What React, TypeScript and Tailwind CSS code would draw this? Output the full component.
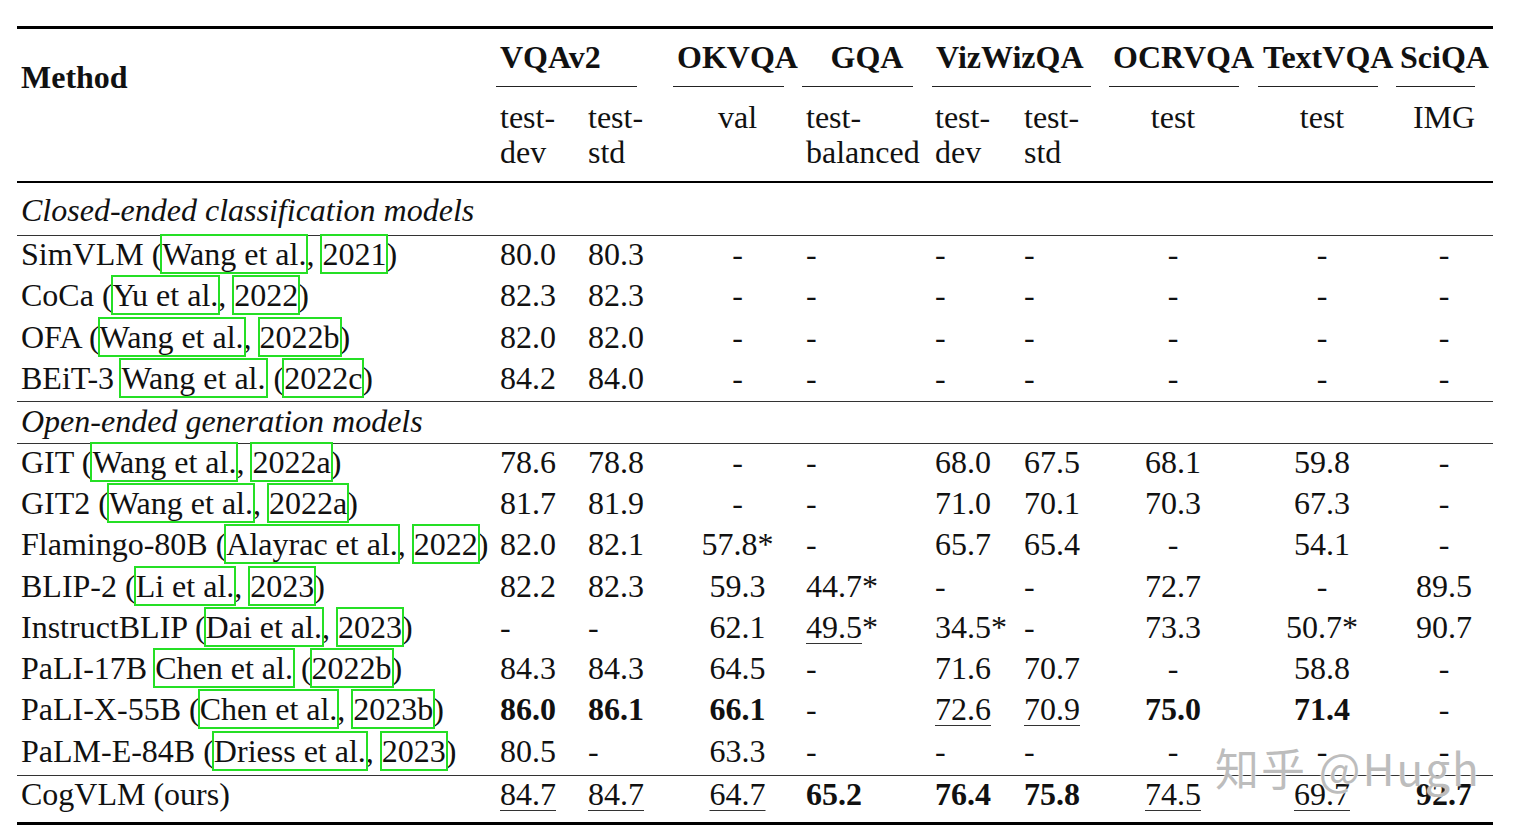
import React from "react";

type Val = string | { v: string; b?: boolean; u?: boolean };

const COLS =
  "grid grid-cols-[479px_88px_89px_129px_130px_88px_89px_149px_138px_97px]";

// per-column alignment of body cells
const CELL = [
  "pl-[4px] whitespace-nowrap",
  "pl-[4px]",
  "pl-[4px]",
  "text-center",
  "pl-[4px]",
  "pl-[3px]",
  "pl-[4px]",
  "text-center pr-[21px]",
  "text-center pr-[10px]",
  "text-center pr-[1px]",
];

function C({ children }: { children: React.ReactNode }) {
  return <span className="outline-2 outline-solid outline-[#25df25]">{children}</span>;
}

function Num({ val }: { val: Val }) {
  if (typeof val === "string") return <>{val}</>;
  const star = val.v.endsWith("*");
  const core = star ? val.v.slice(0, -1) : val.v;
  return (
    <span className={val.b ? "font-bold" : ""}>
      <span className={val.u ? "underline decoration-[1px] underline-offset-[5px] decoration-[#333]" : ""}>
        {core}
      </span>
      {star ? "*" : ""}
    </span>
  );
}

const b = (v: string): Val => ({ v, b: true });
const u = (v: string): Val => ({ v, u: true });

const CLOSED: { m: React.ReactNode; vals: Val[] }[] = [
  {
    m: <>SimVLM (<C>Wang et al.</C>, <C>2021</C>)</>,
    vals: ["80.0", "80.3", "-", "-", "-", "-", "-", "-", "-"],
  },
  {
    m: <>CoCa (<C>Yu et al.</C>, <C>2022</C>)</>,
    vals: ["82.3", "82.3", "-", "-", "-", "-", "-", "-", "-"],
  },
  {
    m: <>OFA (<C>Wang et al.</C>, <C>2022b</C>)</>,
    vals: ["82.0", "82.0", "-", "-", "-", "-", "-", "-", "-"],
  },
  {
    m: <>BEiT-3 <C>Wang et al.</C> (<C>2022c</C>)</>,
    vals: ["84.2", "84.0", "-", "-", "-", "-", "-", "-", "-"],
  },
];

const OPEN: { m: React.ReactNode; vals: Val[] }[] = [
  {
    m: <>GIT (<C>Wang et al.</C>, <C>2022a</C>)</>,
    vals: ["78.6", "78.8", "-", "-", "68.0", "67.5", "68.1", "59.8", "-"],
  },
  {
    m: <>GIT2 (<C>Wang et al.</C>, <C>2022a</C>)</>,
    vals: ["81.7", "81.9", "-", "-", "71.0", "70.1", "70.3", "67.3", "-"],
  },
  {
    m: <>Flamingo-80B (<C>Alayrac et al.</C>, <C>2022</C>)</>,
    vals: ["82.0", "82.1", "57.8*", "-", "65.7", "65.4", "-", "54.1", "-"],
  },
  {
    m: <>BLIP-2 (<C>Li et al.</C>, <C>2023</C>)</>,
    vals: ["82.2", "82.3", "59.3", "44.7*", "-", "-", "72.7", "-", "89.5"],
  },
  {
    m: <>InstructBLIP (<C>Dai et al.</C>, <C>2023</C>)</>,
    vals: ["-", "-", "62.1", u("49.5*"), "34.5*", "-", "73.3", "50.7*", "90.7"],
  },
  {
    m: <>PaLI-17B <C>Chen et al.</C> (<C>2022b</C>)</>,
    vals: ["84.3", "84.3", "64.5", "-", "71.6", "70.7", "-", "58.8", "-"],
  },
  {
    m: <>PaLI-X-55B (<C>Chen et al.</C>, <C>2023b</C>)</>,
    vals: [b("86.0"), b("86.1"), b("66.1"), "-", u("72.6"), u("70.9"), b("75.0"), b("71.4"), "-"],
  },
  {
    m: <>PaLM-E-84B (<C>Driess et al.</C>, <C>2023</C>)</>,
    vals: ["80.5", "-", "63.3", "-", "-", "-", "-", "-", "-"],
  },
];

const OURS: { m: React.ReactNode; vals: Val[] }[] = [
  {
    m: <>CogVLM (ours)</>,
    vals: [u("84.7"), u("84.7"), u("64.7"), b("65.2"), b("76.4"), b("75.8"), u("74.5"), u("69.7"), b("92.7")],
  },
];

function Rows({ rows, className }: { rows: { m: React.ReactNode; vals: Val[] }[]; className: string }) {
  return (
    <div className={`${COLS} leading-[41.3px] ${className}`}>
      {rows.map((r, i) => (
        <React.Fragment key={i}>
          <div className={CELL[0]}>{r.m}</div>
          {r.vals.map((v, j) => (
            <div key={j} className={CELL[j + 1]}>
              <Num val={v} />
            </div>
          ))}
        </React.Fragment>
      ))}
    </div>
  );
}

function Header() {
  return (
    <div className={`${COLS} grid-rows-[57px_1px_94px]`}>
      <div className="row-span-3 pl-[4px] pt-[28px] font-bold leading-[41px]">Method</div>

      {/* group titles */}
      <div className="col-span-2 pl-[4px] pt-[8px] font-bold leading-[41px]">VQAv2</div>
      <div className="pt-[8px] text-center font-bold leading-[41px] whitespace-nowrap">OKVQA</div>
      <div className="pt-[8px] text-center font-bold leading-[41px]">GQA</div>
      <div className="col-span-2 pl-[4px] pt-[8px] font-bold leading-[41px]">VizWizQA</div>
      <div className="pl-[4px] pt-[8px] font-bold leading-[41px]">OCRVQA</div>
      <div className="pl-[5px] pt-[8px] font-bold leading-[41px]">TextVQA</div>
      <div className="pl-[4px] pt-[8px] font-bold leading-[41px]">SciQA</div>

      {/* cmidrules */}
      <div className="col-span-2 h-px w-[141px] bg-[#222]" />
      <div className="h-px w-[111px] bg-[#222]" />
      <div className="h-px w-[111px] bg-[#222]" />
      <div className="col-span-2 h-px w-[159px] bg-[#222]" />
      <div className="h-px w-[130px] bg-[#222]" />
      <div className="h-px w-[120px] bg-[#222]" />
      <div className="h-px w-[79px] bg-[#222]" />

      {/* split names */}
      <div className="pl-[4px] pt-[13px] leading-[35px]">test-<br />dev</div>
      <div className="pl-[4px] pt-[13px] leading-[35px]">test-<br />std</div>
      <div className="pt-[13px] text-center leading-[35px]">val</div>
      <div className="pl-[4px] pt-[13px] leading-[35px]">test-<br />balanced</div>
      <div className="pl-[3px] pt-[13px] leading-[35px]">test-<br />dev</div>
      <div className="pl-[4px] pt-[13px] leading-[35px]">test-<br />std</div>
      <div className="pr-[21px] pt-[13px] text-center leading-[35px]">test</div>
      <div className="pr-[10px] pt-[13px] text-center leading-[35px]">test</div>
      <div className="pr-[1px] pt-[13px] text-center leading-[35px]">IMG</div>
    </div>
  );
}

export default function App() {
  return (
    <div className="relative h-[840px] overflow-hidden bg-white pl-[17px] pt-[26px] font-['Liberation_Serif',serif] text-[32px] text-[#111]">
      <div className="w-[1476px]">
        <div className="h-[3px] bg-black" />
        <Header />
        <div className="h-[2px] bg-black" />
        <div className="pb-[4px] pl-[4px] pt-[7px] italic leading-[41px]">Closed-ended classification models</div>
        <div className="h-px bg-[#333]" />
        <Rows rows={CLOSED} className="-mt-[2px] pb-[1.5px]" />
        <div className="h-px bg-[#333]" />
        <div className="-mt-[1px] pb-[1px] pl-[4px] italic leading-[41px]">Open-ended generation models</div>
        <div className="h-px bg-[#333]" />
        <Rows rows={OPEN} className="-mt-[2px] pb-[3px]" />
        <div className="h-px bg-[#333]" />
        <Rows rows={OURS} className="-mt-[2px] pb-[7px]" />
        <div className="h-[3px] bg-black" />
      </div>

      {/* watermark */}
      <div className="pointer-events-none absolute left-[1215px] top-[745px] whitespace-nowrap font-['Noto_Sans_CJK_SC','Noto_Sans',sans-serif] text-[44px] leading-none tracking-[2px] text-[#a8a8a8]/75 [text-shadow:0_0_2px_#fff,0_0_1px_#fff]">
        知乎 @Hugh
      </div>
    </div>
  );
}
